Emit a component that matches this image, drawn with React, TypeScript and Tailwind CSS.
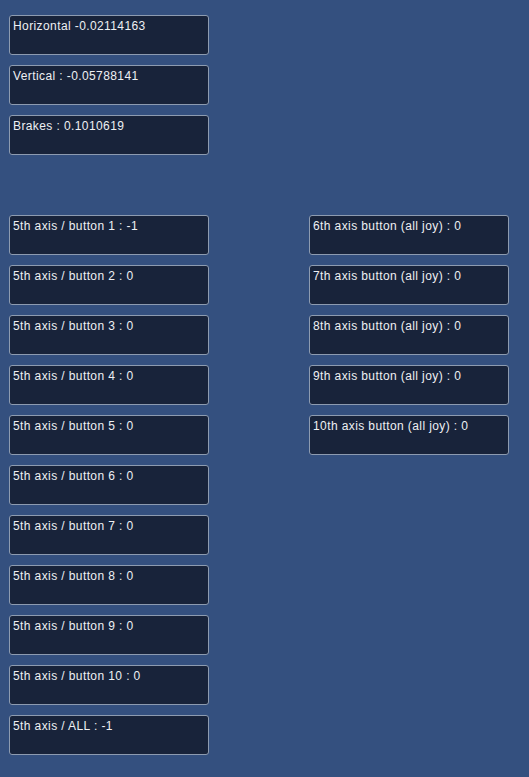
import React from "react";

const left = [
  "Horizontal -0.02114163",
  "Vertical : -0.05788141",
  "Brakes : 0.1010619",
  null,
  "5th axis / button 1 : -1",
  "5th axis / button 2 : 0",
  "5th axis / button 3 : 0",
  "5th axis / button 4 : 0",
  "5th axis / button 5 : 0",
  "5th axis / button 6 : 0",
  "5th axis / button 7 : 0",
  "5th axis / button 8 : 0",
  "5th axis / button 9 : 0",
  "5th axis / button 10 : 0",
  "5th axis / ALL : -1",
];

const right = [
  null,
  null,
  null,
  null,
  "6th axis button (all joy) : 0",
  "7th axis button (all joy) : 0",
  "8th axis button (all joy) : 0",
  "9th axis button (all joy) : 0",
  "10th axis button (all joy) : 0",
];

function Box({ text }: { text: string | null }) {
  if (text === null) return <div className="h-[40px] w-[200px]" />;
  return (
    <div className="h-[40px] w-[200px] rounded-[3px] border border-[#8d9bb0] bg-[#18233a] pl-[3px] pt-[2px] text-[12px] leading-[16px] tracking-[0.4px] text-[#eef0f3] whitespace-nowrap">
      {text}
    </div>
  );
}

export default function App() {
  return (
    <div
      className="w-[529px] h-[777px] bg-[#34507f] flex gap-[100px] pl-[9px] pt-[15px]"
      style={{ fontFamily: '"Liberation Sans", Arial, sans-serif' }}
    >
      <div className="flex flex-col gap-[10px]">
        {left.map((t, i) => (
          <Box key={i} text={t} />
        ))}
      </div>
      <div className="flex flex-col gap-[10px]">
        {right.map((t, i) => (
          <Box key={i} text={t} />
        ))}
      </div>
    </div>
  );
}
